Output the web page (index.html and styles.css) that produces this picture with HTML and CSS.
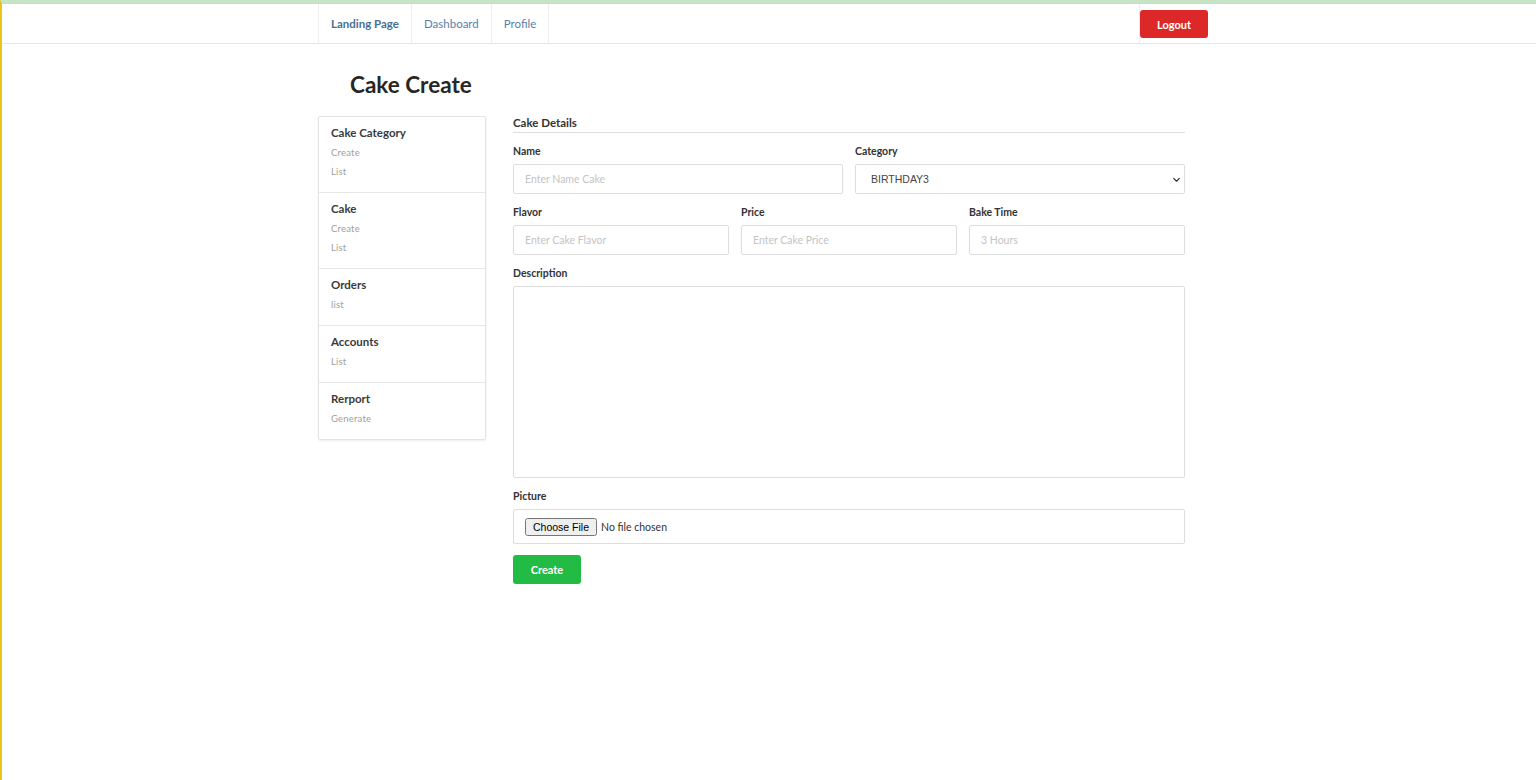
FILE: index.html
```html
<!DOCTYPE html>
<html>
<head>
  <title>Cake Create</title>
  <link rel="stylesheet" href="styles.css">
</head>
<body>
  <div class="frame">
    <nav class="topbar">
      <div class="container topbar-inner">
        <ul class="nav-links">
          <li><a href="#" class="active">Landing Page</a></li>
          <li><a href="#">Dashboard</a></li>
          <li><a href="#">Profile</a></li>
        </ul>
        <div class="nav-right">
          <button class="btn btn-logout">Logout</button>
        </div>
      </div>
    </nav>

    <div class="container">
      <h1 class="page-title">Cake Create</h1>

      <div class="layout">
        <aside class="sidebar">
          <div class="side-group">
            <h4>Cake Category</h4>
            <a href="#">Create</a>
            <a href="#">List</a>
          </div>
          <div class="side-group">
            <h4>Cake</h4>
            <a href="#">Create</a>
            <a href="#">List</a>
          </div>
          <div class="side-group">
            <h4>Orders</h4>
            <a href="#">list</a>
          </div>
          <div class="side-group">
            <h4>Accounts</h4>
            <a href="#">List</a>
          </div>
          <div class="side-group">
            <h4>Rerport</h4>
            <a href="#">Generate</a>
          </div>
        </aside>

        <form class="cake-form">
          <h3 class="form-legend">Cake Details</h3>

          <div class="row row-2">
            <div class="field">
              <label for="name">Name</label>
              <input type="text" id="name" placeholder="Enter Name Cake" />
            </div>
            <div class="field">
              <label for="category">Category</label>
              <select id="category">
                <option>BIRTHDAY3</option>
              </select>
            </div>
          </div>

          <div class="row row-3">
            <div class="field">
              <label for="flavor">Flavor</label>
              <input type="text" id="flavor" placeholder="Enter Cake Flavor" />
            </div>
            <div class="field">
              <label for="price">Price</label>
              <input type="text" id="price" placeholder="Enter Cake Price" />
            </div>
            <div class="field">
              <label for="bake">Bake Time</label>
              <input type="text" id="bake" placeholder="3 Hours" />
            </div>
          </div>

          <div class="field">
            <label for="description">Description</label>
            <textarea id="description"></textarea>
          </div>

          <div class="field">
            <label for="picture">Picture</label>
            <div class="file-box">
              <input type="file" id="picture" />
            </div>
          </div>

          <button type="button" class="btn btn-create">Create</button>
        </form>
      </div>
    </div>
  </div>
</body>
</html>
```

FILE: styles.css
```css
html, body {
  margin: 0;
  padding: 0;
  height: 100%;
}

body {
  font-family: Lato, 'Open Sans', sans-serif;
  color: #333;
  background: #fff;
}

.frame {
  min-height: 100%;
  box-sizing: border-box;
  border-left: 2px solid #e6c619;
  border-top: 3px solid #c8e4c6;
}

.container {
  width: 890px;
  margin-left: 316px;
}

/* Top navigation */
.topbar {
  border-top: 1px solid #cfd8cf;
  border-bottom: 1px solid #e6e6e6;
  height: 39px;
}

.topbar-inner {
  display: flex;
  justify-content: space-between;
  height: 100%;
}

.nav-links {
  display: flex;
  list-style: none;
  margin: 0;
  padding: 0;
}

.nav-links a {
  display: flex;
  align-items: center;
  height: 39px;
  padding: 0 12px;
  font-size: 11.5px;
  color: #5a80a8;
  text-decoration: none;
  border-right: 1px solid #eee;
}

.nav-links li:first-child a {
  border-left: 1px solid #eee;
}

.nav-links a.active {
  font-weight: bold;
  color: #4a6f93;
}

.nav-right {
  display: flex;
  align-items: center;
  border-left: 1px solid #eee;
}

.btn {
  font-family: Lato, sans-serif;
  font-weight: bold;
  font-size: 11px;
  color: #fff;
  border: none;
  border-radius: 3px;
  cursor: pointer;
}

.btn-logout {
  background: #dc2828;
  width: 68px;
  height: 28px;
  margin-top: 1px;
}

.page-title {
  font-size: 22.5px;
  font-weight: bold;
  color: #262626;
  margin: 26px 0 0 32px;
  line-height: 30px;
}

.layout {
  display: flex;
  gap: 27px;
  margin-top: 16px;
}

/* Sidebar */
.sidebar {
  width: 166px;
  border: 1px solid #e3e3e3;
  border-radius: 2px;
  box-shadow: 0 1px 2px rgba(0, 0, 0, 0.08);
  align-self: flex-start;
}

.side-group {
  padding: 9px 12px 11px;
  border-bottom: 1px solid #e6e6e6;
}

.side-group:last-child {
  border-bottom: none;
}

.side-group h4 {
  margin: 0 0 3px;
  font-size: 11.5px;
  font-weight: bold;
  line-height: 14px;
  color: #3a3a3a;
}

.side-group a {
  display: block;
  font-size: 9.5px;
  line-height: 19px;
  color: #a0a0a0;
  text-decoration: none;
  letter-spacing: 0.2px;
}

/* Form */
.cake-form {
  width: 672px;
}

.form-legend {
  margin: 0;
  font-size: 11.5px;
  font-weight: bold;
  color: #333;
  line-height: 14px;
  padding-bottom: 2px;
  border-bottom: 1px solid #ddd;
}

.row {
  display: grid;
  gap: 12px;
}

.row-2 {
  grid-template-columns: 1fr 1fr;
}

.row-3 {
  grid-template-columns: 1fr 1fr 1fr;
}

.field label {
  display: block;
  font-size: 10.5px;
  font-weight: bold;
  color: #333;
  line-height: 14px;
  margin: 11px 0 6px;
}

input, select, textarea {
  width: 100%;
  box-sizing: border-box;
  border: 1px solid #ddd;
  border-radius: 2px;
  font-family: Lato, sans-serif;
  font-size: 10.5px;
  color: #333;
  background: #fff;
}

input[type="text"] {
  height: 30px;
  padding: 0 11px;
}

input::placeholder {
  color: #c4c4c4;
}

select {
  height: 30px;
  padding: 0 15px;
  font-family: 'Liberation Sans', Arial, sans-serif;
  font-size: 10.5px;
  color: #444;
  appearance: none;
  background-image: url("data:image/svg+xml;utf8,<svg xmlns='http://www.w3.org/2000/svg' viewBox='0 0 16 16'><path fill='none' stroke='%23333' stroke-width='2.2' stroke-linecap='round' stroke-linejoin='round' d='M3 6l5 5 5-5'/></svg>");
  background-repeat: no-repeat;
  background-position: right 3px center;
  background-size: 9px 9px;
}

textarea {
  height: 192px;
  resize: none;
  display: block;
}

.file-box {
  border: 1px solid #ddd;
  border-radius: 2px;
  height: 35px;
  box-sizing: border-box;
  display: flex;
  align-items: center;
  padding: 0 11px;
}

.file-box input[type="file"] {
  border: none;
  padding: 0;
  font-size: 10.5px;
  font-family: Lato, sans-serif;
}

.btn-create {
  background: #22bb44;
  width: 68px;
  height: 29px;
  margin-top: 11px;
}
```
